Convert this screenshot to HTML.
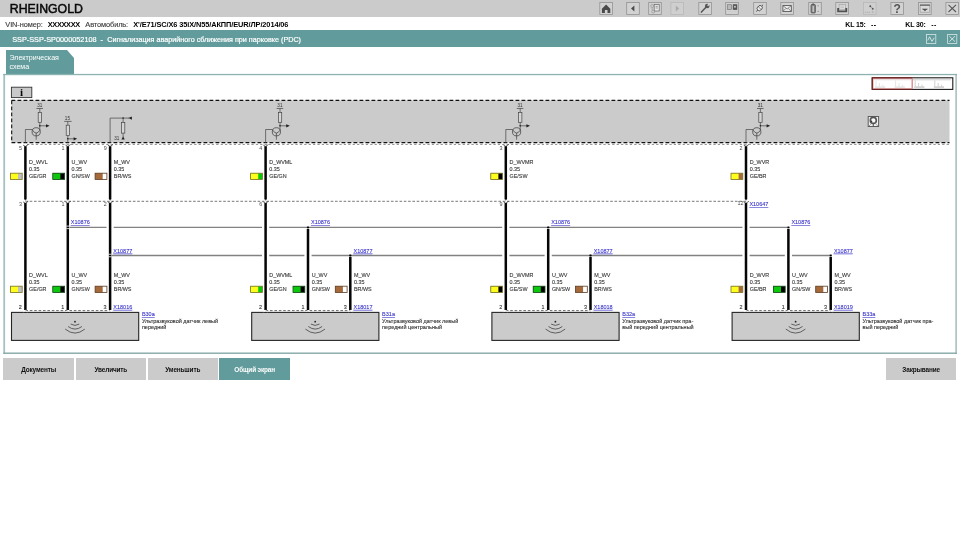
<!DOCTYPE html>
<html lang="ru"><head><meta charset="utf-8"><title>RHEINGOLD</title>
<style>
html,body{margin:0;padding:0;}
body{width:960px;height:540px;overflow:hidden;background:#fff;position:relative;font-family:"Liberation Sans",sans-serif;color:#000;}
#wrap{position:absolute;left:0;top:0;width:960px;height:540px;will-change:transform;}
.abs{position:absolute;}
#top{left:0;top:0;width:960px;height:17px;background:#cbcbcb;}
#logo{left:9.8px;top:3.3px;font-size:12.3px;line-height:13px;color:#0a0a0a;white-space:nowrap;-webkit-text-stroke:0.5px #0a0a0a;}
.row2{top:19.6px;font-size:7px;line-height:9px;white-space:nowrap;letter-spacing:-0.1px;}
.row2 b{font-weight:bold;color:#000;}
.lab{color:#3a3a3a;font-size:7.4px;-webkit-text-stroke:0.12px #3a3a3a;}
#bar{left:0;top:30.3px;width:960px;height:16.9px;background:#629b9b;}
#bartxt{left:12.2px;top:34.6px;font-size:7.3px;line-height:9px;color:#fff;white-space:nowrap;-webkit-text-stroke:0.2px #fff;}
#bartxt2{left:107.2px;top:34.6px;font-size:7.2px;line-height:9px;color:#fff;white-space:nowrap;-webkit-text-stroke:0.2px #fff;}
#tab{left:6px;top:50px;width:68px;height:24.4px;background:#629b9b;clip-path:polygon(0 0,61px 0,68px 8px,68px 100%,0 100%);}
#tabtxt{left:9.4px;top:53.7px;font-size:7.1px;line-height:9.3px;color:#fff;white-space:nowrap;}
#panel{left:3.3px;top:73.9px;width:950px;height:277.4px;border:1.6px solid #a8c1c1;border-top:1.3px solid #8cb2b2;border-bottom:1.4px solid #86a8a8;border-left:2px solid #a6c1c4;background:#fff;}
.btn{top:357.9px;height:22.1px;background:#cbcbcb;font-size:6.45px;font-weight:bold;color:#111;text-align:center;line-height:24.4px;white-space:nowrap;letter-spacing:-0.15px;}
svg text{font-family:"Liberation Sans",sans-serif;}
.t5{font-size:5.4px;fill:#3a3a3a;stroke:#3a3a3a;stroke-width:0.12px;}
.t4{font-size:4.6px;fill:#333;}
.pn{fill:#4a4a4a;stroke:none;}
.pn2{fill:#333;}
.ds{fill:#2e2e2e;font-size:5.5px;}
.lk{font-size:5.5px;fill:#3a34c8;text-decoration:underline;stroke:#3a34c8;stroke-width:0.1px;}
</style></head>
<body>
<div id="wrap">
<div id="top" class="abs"></div>
<div id="logo" class="abs">RHEINGOLD</div>
<div class="abs row2 lab" style="left:5.3px">VIN-номер:</div>
<div class="abs row2" style="left:47.8px;font-size:7.4px;letter-spacing:-0.36px"><b>XXXXXXX</b></div>
<div class="abs row2 lab" style="left:85.3px">Автомобиль:</div>
<div class="abs row2" style="left:133.2px;font-size:7.4px"><b>X'/E71/SC/X6 35iX/N55/АКПП/EUR/ЛР/2014/06</b></div>
<div class="abs row2" style="left:845.2px"><b>KL 15:</b></div><div class="abs row2" style="left:871px;letter-spacing:0.4px"><b>--</b></div>
<div class="abs row2" style="left:905.2px"><b>KL 30:</b></div><div class="abs row2" style="left:931.3px;letter-spacing:0.4px"><b>--</b></div>
<div id="bar" class="abs"></div>
<div id="bartxt" class="abs">SSP-SSP-SP0000052108&nbsp; -</div>
<div id="bartxt2" class="abs">Сигнализация аварийного сближения при парковке (PDC)</div>
<div id="tab" class="abs"></div>
<div id="tabtxt" class="abs">Электрическая<br>схема</div>
<div class="abs btn" style="left:3.4px;width:70.5px">Документы</div>
<div class="abs btn" style="left:75.7px;width:70.3px">Увеличить</div>
<div class="abs btn" style="left:147.7px;width:70.1px">Уменьшить</div>
<div class="abs btn" style="left:219.4px;width:70.6px;background:#629b9b;color:#fff">Общий экран</div>
<div class="abs btn" style="left:886.2px;width:70px">Закрывание</div>
<svg class="abs" style="left:0;top:0" width="960" height="540" viewBox="0 0 960 540">
<g transform="translate(599.3,2)"><rect x="0.5" y="0.5" width="12.6" height="12" fill="#d2d2d2" stroke="#939393" stroke-width="0.8"/><path d="M2.6 6.8L6.8 2.6L11 6.8V11H8.2V8H5.6v3H2.6Z" fill="#4a4a4a"/></g>
<g transform="translate(626.2,2)"><rect x="0.5" y="0.5" width="12.6" height="12" fill="#d2d2d2" stroke="#939393" stroke-width="0.8"/><path d="M8.2 3.6L4.8 6.5L8.2 9.4Z" fill="#4a4a4a"/></g>
<g transform="translate(648.2,2)"><rect x="0.5" y="0.5" width="12.6" height="12" fill="#d2d2d2" stroke="#939393" stroke-width="0.8"/><rect x="6" y="2.6" width="5" height="6.4" fill="#e8e8e8" stroke="#666" stroke-width="0.7"/><path d="M7.4 4.4h2.2M7.4 6h2.2" stroke="#666" stroke-width="0.6"/><circle cx="4" cy="4" r="1.5" fill="none" stroke="#888" stroke-width="0.6"/><circle cx="5" cy="9.6" r="1.5" fill="none" stroke="#888" stroke-width="0.6"/><path d="M4 5.5V8" stroke="#888" stroke-width="0.6"/></g>
<g transform="translate(670.4,2)"><rect x="0.5" y="0.5" width="12.6" height="12" fill="#cfcfcf" stroke="#b8b8b8" stroke-width="0.8"/><path d="M5.4 3.6L8.8 6.5L5.4 9.4Z" fill="#aaa"/></g>
<g transform="translate(698.3,2)"><rect x="0.5" y="0.5" width="12.6" height="12" fill="#d2d2d2" stroke="#939393" stroke-width="0.8"/><path d="M3.1 10.1L7.9 5.1" stroke="#555" stroke-width="1.5" stroke-linecap="round"/><circle cx="8.9" cy="4" r="2.3" fill="#555"/><path d="M9.3 3.7L11.6 1.4" stroke="#d2d2d2" stroke-width="1.5"/></g>
<g transform="translate(725.2,2)"><rect x="0.5" y="0.5" width="12.6" height="12" fill="#d2d2d2" stroke="#939393" stroke-width="0.8"/><rect x="2.4" y="2.7" width="4" height="4.9" fill="#b9b9b9" stroke="#7a7a7a" stroke-width="0.7"/><rect x="7.9" y="2.7" width="3.8" height="4.9" fill="#555" stroke="#4a4a4a" stroke-width="0.6"/><rect x="9" y="3.9" width="1.5" height="1.7" fill="#ddd"/><path d="M2.6 9.7h8.8" stroke="#c4c4c4" stroke-width="0.6"/></g>
<g transform="translate(753.2,2)"><rect x="0.5" y="0.5" width="12.6" height="12" fill="#d2d2d2" stroke="#939393" stroke-width="0.8"/><g transform="rotate(45 6.5 6.1)"><path d="M6.5 1.3V10.9" stroke="#4a4a4a" stroke-width="0.9"/><rect x="4.4" y="3.5" width="4.2" height="5.2" rx="1.7" fill="#efefef" stroke="#4a4a4a" stroke-width="0.9"/><path d="M4.4 6.1H8.6" stroke="#4a4a4a" stroke-width="0.6"/></g></g>
<g transform="translate(780.3,2)"><rect x="0.5" y="0.5" width="12.6" height="12" fill="#d2d2d2" stroke="#939393" stroke-width="0.8"/><rect x="2.6" y="3.6" width="8.4" height="5.8" fill="#e9e9e9" stroke="#4a4a4a" stroke-width="0.8"/><path d="M2.8 3.8L6.8 7L10.8 3.8M2.8 9.2L5.6 6.4M10.8 9.2L8 6.4" stroke="#4a4a4a" stroke-width="0.6" fill="none"/></g>
<g transform="translate(808.2,2)"><rect x="0.5" y="0.5" width="12.6" height="12" fill="#d2d2d2" stroke="#939393" stroke-width="0.8"/><rect x="2.9" y="2.6" width="4.2" height="8.3" rx="0.6" fill="#8a8a8a" stroke="#505050" stroke-width="0.9"/><rect x="4.1" y="1.5" width="1.8" height="1.1" fill="#505050"/><path d="M5 4V10" stroke="#d8d8d8" stroke-width="1"/><path d="M9.2 3.8h1.6M9.2 9.4h1.6" stroke="#8a8a8a" stroke-width="0.8"/></g>
<g transform="translate(835.3,2)"><rect x="0.5" y="0.5" width="12.6" height="12" fill="#d2d2d2" stroke="#939393" stroke-width="0.8"/><rect x="3.8" y="2.6" width="6.2" height="4.6" fill="#e0e0e0" stroke="#9a9a9a" stroke-width="0.6"/><path d="M5 4h3.8M5 5.4h3.8" stroke="#b0b0b0" stroke-width="0.6"/><path d="M1.9 6.1h1.9v2.3h6.2V6.1h1.9V10.3H1.9Z" fill="#515151"/></g>
<g transform="translate(863,2)"><rect x="0.5" y="0.5" width="12.6" height="12" fill="#cfcfcf" stroke="#b8b8b8" stroke-width="0.8"/><circle cx="7.3" cy="4.3" r="0.95" fill="#4c4c4c"/><circle cx="9.7" cy="6.8" r="0.95" fill="#555"/><circle cx="8.6" cy="5.6" r="0.5" fill="#9a9a9a"/><path d="M1.8 10.4h1.4M3.8 10.4h1.4M5.8 10.4h1.4M9 9.4l1.6 1.4" stroke="#b4b4b4" stroke-width="1.4"/></g>
<g transform="translate(890.4,2)"><rect x="0.5" y="0.5" width="12.6" height="12" fill="#d2d2d2" stroke="#939393" stroke-width="0.8"/><text x="6.7" y="10.9" text-anchor="middle" style="font-family:'Liberation Sans',sans-serif;font-size:12px;font-weight:bold;fill:#555">?</text></g>
<g transform="translate(918.1,2)"><rect x="0.5" y="0.5" width="12.6" height="12" fill="#d2d2d2" stroke="#939393" stroke-width="0.8"/><path d="M2.1 3.2V10.3H11.6V3.2" fill="#dadada" stroke="#9a9a9a" stroke-width="0.7"/><path d="M1.9 3.1h9.9" stroke="#505050" stroke-width="1.2"/><path d="M4.3 7.1h5l-2.5 2.2z" fill="#505050"/><path d="M4 7h5.6" stroke="#505050" stroke-width="0.6"/></g>
<g transform="translate(945.4,2)"><rect x="0.5" y="0.5" width="12.6" height="12" fill="#d2d2d2" stroke="#939393" stroke-width="0.8"/><path d="M3.1 2.9L10.6 10M10.6 2.9L3.1 10" stroke="#555" stroke-width="1.05"/></g>
<g transform="translate(926,34)"><rect x="0.4" y="0.4" width="9.4" height="9" fill="none" stroke="#d6e6e6" stroke-width="0.8"/><path d="M1.8 6.4L3.6 2.8L6 7.4L8.2 3.8" stroke="#e8f2f2" stroke-width="0.8" fill="none"/></g>
<g transform="translate(947.2,34)"><rect x="0.4" y="0.4" width="9.2" height="9" fill="none" stroke="#d6e6e6" stroke-width="0.8"/><path d="M2.2 2.2L7.8 7.6M7.8 2.2L2.2 7.6" stroke="#eef6f6" stroke-width="0.8" fill="none"/></g>
<rect x="3.3" y="73.9" width="1.8" height="280" fill="#a6c1c4"/>
<rect x="955.3" y="73.9" width="1.6" height="280" fill="#a8c0c0"/>
<rect x="3.3" y="73.9" width="953.6" height="1.3" fill="#8cb2b2"/>
<rect x="3.3" y="352.5" width="953.6" height="1.4" fill="#86a8a8"/>
<rect x="11.5" y="100.4" width="938" height="42.2" fill="#cbcbcb"/>
<path d="M11.5 100.4H949.5M11.5 142.6H949.5" stroke="#111" stroke-width="1.1" stroke-dasharray="3.8 2.2" fill="none"/>
<path d="M11.7 100.4V142.6" stroke="#111" stroke-width="1.1" stroke-dasharray="3.8 2.2" fill="none"/>
<path d="M27 144.4H949.5" stroke="#8c8c8c" stroke-width="1" stroke-dasharray="2.3 2.1" fill="none"/>
<path d="M25.4 201.3H746" stroke="#555" stroke-width="0.8" stroke-dasharray="2.6 1.7" fill="none"/>
<path d="M69.4 227.4H106.5M113.7 227.4H262M269.2 227.4H502.2M509.4 227.4H742.4M749.6 227.4H787.4" stroke="#828282" stroke-width="1.3" fill="none"/>
<path d="M111.7 255.5H262M269.2 255.5H304.4M311.6 255.5H502.2M509.4 255.5H544.6M551.8 255.5H742.4M749.6 255.5H784.8M792 255.5H829.7" stroke="#828282" stroke-width="1.3" fill="none"/>
<g>
<text x="39.7" y="107" class="t4" text-anchor="middle">31</text><path d="M36.4 108.5H43M39.8 108.5V112.4M39.8 122.3V130" stroke="#444" stroke-width="0.7" fill="none"/><rect x="38.2" y="112.4" width="3.3" height="9.9" fill="#d6d6d6" stroke="#444" stroke-width="0.7"/><path d="M39.8 125.8H46.5" stroke="#444" stroke-width="0.7"/><path d="M46 124.2L49.6 125.8L46 127.4Z" fill="#222"/><circle cx="39.8" cy="125.8" r="0.8" fill="#222"/><circle cx="36.2" cy="131.8" r="4.1" fill="none" stroke="#444" stroke-width="0.8"/><path d="M32.6 130.2 Q36.2 136 39.8 130.2" stroke="#444" stroke-width="0.8" fill="none"/><path d="M36.2 133V139.7" stroke="#444" stroke-width="0.7"/><path d="M32.4 129.5H25.4V143" stroke="#444" stroke-width="0.7" fill="none"/>
<text x="67.4" y="119.6" class="t4" text-anchor="middle">15</text><path d="M64.2 121.4H71.6M67.8 121.4V125.2M67.8 135.5V143" stroke="#444" stroke-width="0.7" fill="none"/><rect x="66.2" y="125.2" width="3.3" height="10.3" fill="#d6d6d6" stroke="#444" stroke-width="0.7"/><path d="M67.8 138.8H74" stroke="#444" stroke-width="0.7"/><path d="M73.6 137.2L77.2 138.8L73.6 140.4Z" fill="#222"/><circle cx="67.8" cy="138.8" r="0.8" fill="#222"/>
<path d="M110.1 143V118.1H129" stroke="#444" stroke-width="0.7" fill="none"/><path d="M128.3 118.1L131.9 116.5V119.7Z" fill="#222"/><circle cx="123.1" cy="118.1" r="0.8" fill="#222"/><path d="M123.1 118.1V122.4M123.1 133.1V137.5" stroke="#444" stroke-width="0.7" fill="none"/><rect x="121.5" y="122.4" width="3.3" height="10.7" fill="#d6d6d6" stroke="#444" stroke-width="0.7"/><path d="M123.1 136.6L124.8 139.6H121.4Z" fill="#222"/><text x="116.7" y="139.7" class="t4" text-anchor="middle">31</text>
<rect x="24.15" y="146.2" width="2.5" height="53" fill="#050505"/>
<path d="M23.1 145.1L25.4 146.4L28.3 144.5" stroke="#222" stroke-width="0.7" fill="none"/>
<rect x="24.15" y="203" width="2.5" height="107" fill="#050505"/>
<path d="M23.1 201.9L25.4 203.2L28.3 201.3" stroke="#222" stroke-width="0.7" fill="none"/>
<path d="M24.15 199.2h2.5l-1.25 1.2z" fill="#050505"/>
<text x="22" y="149.6" class="t5 pn" text-anchor="end">5</text>
<text x="22" y="206" class="t5 pn" text-anchor="end">3</text>
<rect x="66.55" y="146.2" width="2.5" height="53" fill="#050505"/>
<path d="M65.5 145.1L67.8 146.4L70.7 144.5" stroke="#222" stroke-width="0.7" fill="none"/>
<rect x="66.55" y="203" width="2.5" height="107" fill="#050505"/>
<path d="M65.5 201.9L67.8 203.2L70.7 201.3" stroke="#222" stroke-width="0.7" fill="none"/>
<path d="M66.55 199.2h2.5l-1.25 1.2z" fill="#050505"/>
<text x="64.4" y="149.6" class="t5 pn" text-anchor="end">1</text>
<text x="64.4" y="206" class="t5 pn" text-anchor="end">1</text>
<rect x="108.85" y="146.2" width="2.5" height="53" fill="#050505"/>
<path d="M107.8 145.1L110.1 146.4L113 144.5" stroke="#222" stroke-width="0.7" fill="none"/>
<rect x="108.85" y="203" width="2.5" height="107" fill="#050505"/>
<path d="M107.8 201.9L110.1 203.2L113 201.3" stroke="#222" stroke-width="0.7" fill="none"/>
<path d="M108.85 199.2h2.5l-1.25 1.2z" fill="#050505"/>
<text x="106.7" y="149.6" class="t5 pn" text-anchor="end">9</text>
<text x="106.7" y="206" class="t5 pn" text-anchor="end">2</text>
<rect x="66.4" y="225.7" width="2.8" height="0.8" fill="#fff"/>
<rect x="66.4" y="228.3" width="2.8" height="0.8" fill="#fff"/>
<rect x="108.7" y="253.8" width="2.8" height="0.8" fill="#fff"/>
<rect x="108.7" y="256.4" width="2.8" height="0.8" fill="#fff"/>
<text x="29.1" y="163.6" class="t5">D_WVL</text><text x="29.1" y="170.9" class="t5">0.35</text><text x="29.1" y="178.2" class="t5">GE/GR</text><rect x="10.4" y="173.2" width="11.8" height="6.2" fill="#c0c0c0"/><rect x="10.4" y="173.2" width="7.6" height="6.2" fill="#ffff1e"/><rect x="10.4" y="173.2" width="11.8" height="6.2" fill="none" stroke="#7d7420" stroke-width="0.8"/>
<text x="71.5" y="163.6" class="t5">U_WV</text><text x="71.5" y="170.9" class="t5">0.35</text><text x="71.5" y="178.2" class="t5">GN/SW</text><rect x="52.8" y="173.2" width="11.8" height="6.2" fill="#000000"/><rect x="52.8" y="173.2" width="7.6" height="6.2" fill="#0cc80c"/><rect x="52.8" y="173.2" width="11.8" height="6.2" fill="none" stroke="#14501a" stroke-width="0.8"/>
<text x="113.8" y="163.6" class="t5">M_WV</text><text x="113.8" y="170.9" class="t5">0.35</text><text x="113.8" y="178.2" class="t5">BR/WS</text><rect x="95.1" y="173.2" width="11.8" height="6.2" fill="#ffffff"/><rect x="95.1" y="173.2" width="7.6" height="6.2" fill="#a5693a"/><rect x="95.1" y="173.2" width="11.8" height="6.2" fill="none" stroke="#5a3a22" stroke-width="0.8"/>
<text x="29.1" y="276.6" class="t5">D_WVL</text><text x="29.1" y="283.9" class="t5">0.35</text><text x="29.1" y="291.2" class="t5">GE/GR</text><rect x="10.4" y="286.2" width="11.8" height="6.2" fill="#c0c0c0"/><rect x="10.4" y="286.2" width="7.6" height="6.2" fill="#ffff1e"/><rect x="10.4" y="286.2" width="11.8" height="6.2" fill="none" stroke="#7d7420" stroke-width="0.8"/>
<text x="71.5" y="276.6" class="t5">U_WV</text><text x="71.5" y="283.9" class="t5">0.35</text><text x="71.5" y="291.2" class="t5">GN/SW</text><rect x="52.8" y="286.2" width="11.8" height="6.2" fill="#000000"/><rect x="52.8" y="286.2" width="7.6" height="6.2" fill="#0cc80c"/><rect x="52.8" y="286.2" width="11.8" height="6.2" fill="none" stroke="#14501a" stroke-width="0.8"/>
<text x="113.8" y="276.6" class="t5">M_WV</text><text x="113.8" y="283.9" class="t5">0.35</text><text x="113.8" y="291.2" class="t5">BR/WS</text><rect x="95.1" y="286.2" width="11.8" height="6.2" fill="#ffffff"/><rect x="95.1" y="286.2" width="7.6" height="6.2" fill="#a5693a"/><rect x="95.1" y="286.2" width="11.8" height="6.2" fill="none" stroke="#5a3a22" stroke-width="0.8"/>
<text x="70.8" y="224.3" class="lk">X10876</text>
<text x="113.3" y="252.6" class="lk">X10877</text>
<text x="21.8" y="308.8" class="t5 pn2" text-anchor="end">2</text>
<text x="64.2" y="308.8" class="t5 pn2" text-anchor="end">1</text>
<text x="106.5" y="308.8" class="t5 pn2" text-anchor="end">3</text>
<text x="113.3" y="308.9" class="lk">X18016</text>
<path d="M25.4 310.6H110.1" stroke="#444" stroke-width="0.8" stroke-dasharray="2.6 1.8" fill="none"/>
<rect x="11.5" y="312.4" width="127.2" height="28" fill="#cbcbcb" stroke="#262626" stroke-width="1.1"/>
<circle cx="75" cy="321.7" r="0.9" fill="#222"/>
<path d="M70.7 324.1Q75 326.7 79.3 324.1M68.1 326.5Q75 331.7 81.9 326.5M65.2 329.1Q75 337.1 84.8 329.1" stroke="#4a4a4a" stroke-width="0.85" fill="none"/>
<path d="M23.5 311.9L25.4 310.3L27.3 311.9" stroke="#fff" stroke-width="0.7" fill="none"/>
<path d="M65.9 311.9L67.8 310.3L69.7 311.9" stroke="#fff" stroke-width="0.7" fill="none"/>
<path d="M108.2 311.9L110.1 310.3L112 311.9" stroke="#fff" stroke-width="0.7" fill="none"/>
<text x="141.9" y="316.2" class="lk">B30a</text>
<text x="141.9" y="322.9" class="t5 ds">Ультразвуковой датчик левый</text>
<text x="141.9" y="328.9" class="t5 ds">передний</text>
</g>
<g>
<text x="279.9" y="107" class="t4" text-anchor="middle">31</text><path d="M276.6 108.5H283.2M280 108.5V112.4M280 122.3V130" stroke="#444" stroke-width="0.7" fill="none"/><rect x="278.4" y="112.4" width="3.3" height="9.9" fill="#d6d6d6" stroke="#444" stroke-width="0.7"/><path d="M280 125.8H286.7" stroke="#444" stroke-width="0.7"/><path d="M286.2 124.2L289.8 125.8L286.2 127.4Z" fill="#222"/><circle cx="280" cy="125.8" r="0.8" fill="#222"/><circle cx="276.4" cy="131.8" r="4.1" fill="none" stroke="#444" stroke-width="0.8"/><path d="M272.8 130.2 Q276.4 136 280 130.2" stroke="#444" stroke-width="0.8" fill="none"/><path d="M276.4 133V139.7" stroke="#444" stroke-width="0.7"/><path d="M272.6 129.5H265.6V143" stroke="#444" stroke-width="0.7" fill="none"/>
<rect x="264.35" y="146.2" width="2.5" height="53" fill="#050505"/>
<path d="M263.3 145.1L265.6 146.4L268.5 144.5" stroke="#222" stroke-width="0.7" fill="none"/>
<rect x="264.35" y="203" width="2.5" height="107" fill="#050505"/>
<path d="M263.3 201.9L265.6 203.2L268.5 201.3" stroke="#222" stroke-width="0.7" fill="none"/>
<path d="M264.35 199.2h2.5l-1.25 1.2z" fill="#050505"/>
<text x="262.2" y="149.6" class="t5 pn" text-anchor="end">4</text>
<text x="262.2" y="206" class="t5 pn" text-anchor="end">6</text>
<rect x="306.75" y="228.9" width="2.5" height="81.1" fill="#050505"/>
<rect x="306.85" y="226.5" width="2.3" height="1.8" rx="0.6" fill="#050505"/>
<rect x="349.05" y="257" width="2.5" height="53" fill="#050505"/>
<rect x="349.15" y="254.6" width="2.3" height="1.8" rx="0.6" fill="#050505"/>
<text x="269.3" y="163.6" class="t5">D_WVML</text><text x="269.3" y="170.9" class="t5">0.35</text><text x="269.3" y="178.2" class="t5">GE/GN</text><rect x="250.6" y="173.2" width="11.8" height="6.2" fill="#0cc80c"/><rect x="250.6" y="173.2" width="7.6" height="6.2" fill="#ffff1e"/><rect x="250.6" y="173.2" width="11.8" height="6.2" fill="none" stroke="#7d7420" stroke-width="0.8"/>
<text x="269.3" y="276.6" class="t5">D_WVML</text><text x="269.3" y="283.9" class="t5">0.35</text><text x="269.3" y="291.2" class="t5">GE/GN</text><rect x="250.6" y="286.2" width="11.8" height="6.2" fill="#0cc80c"/><rect x="250.6" y="286.2" width="7.6" height="6.2" fill="#ffff1e"/><rect x="250.6" y="286.2" width="11.8" height="6.2" fill="none" stroke="#7d7420" stroke-width="0.8"/>
<text x="311.7" y="276.6" class="t5">U_WV</text><text x="311.7" y="283.9" class="t5">0.35</text><text x="311.7" y="291.2" class="t5">GN/SW</text><rect x="293" y="286.2" width="11.8" height="6.2" fill="#000000"/><rect x="293" y="286.2" width="7.6" height="6.2" fill="#0cc80c"/><rect x="293" y="286.2" width="11.8" height="6.2" fill="none" stroke="#14501a" stroke-width="0.8"/>
<text x="354" y="276.6" class="t5">M_WV</text><text x="354" y="283.9" class="t5">0.35</text><text x="354" y="291.2" class="t5">BR/WS</text><rect x="335.3" y="286.2" width="11.8" height="6.2" fill="#ffffff"/><rect x="335.3" y="286.2" width="7.6" height="6.2" fill="#a5693a"/><rect x="335.3" y="286.2" width="11.8" height="6.2" fill="none" stroke="#5a3a22" stroke-width="0.8"/>
<text x="311" y="224.3" class="lk">X10876</text>
<text x="353.5" y="252.6" class="lk">X10877</text>
<text x="262" y="308.8" class="t5 pn2" text-anchor="end">2</text>
<text x="304.4" y="308.8" class="t5 pn2" text-anchor="end">1</text>
<text x="346.7" y="308.8" class="t5 pn2" text-anchor="end">3</text>
<text x="353.5" y="308.9" class="lk">X18017</text>
<path d="M265.6 310.6H350.3" stroke="#444" stroke-width="0.8" stroke-dasharray="2.6 1.8" fill="none"/>
<rect x="251.7" y="312.4" width="127.2" height="28" fill="#cbcbcb" stroke="#262626" stroke-width="1.1"/>
<circle cx="315.2" cy="321.7" r="0.9" fill="#222"/>
<path d="M310.9 324.1Q315.2 326.7 319.5 324.1M308.3 326.5Q315.2 331.7 322.1 326.5M305.4 329.1Q315.2 337.1 325 329.1" stroke="#4a4a4a" stroke-width="0.85" fill="none"/>
<path d="M263.7 311.9L265.6 310.3L267.5 311.9" stroke="#fff" stroke-width="0.7" fill="none"/>
<path d="M306.1 311.9L308 310.3L309.9 311.9" stroke="#fff" stroke-width="0.7" fill="none"/>
<path d="M348.4 311.9L350.3 310.3L352.2 311.9" stroke="#fff" stroke-width="0.7" fill="none"/>
<text x="382.1" y="316.2" class="lk">B31a</text>
<text x="382.1" y="322.9" class="t5 ds">Ультразвуковой датчик левый</text>
<text x="382.1" y="328.9" class="t5 ds">передний центральный</text>
</g>
<g>
<text x="520.1" y="107" class="t4" text-anchor="middle">31</text><path d="M516.8 108.5H523.4M520.2 108.5V112.4M520.2 122.3V130" stroke="#444" stroke-width="0.7" fill="none"/><rect x="518.6" y="112.4" width="3.3" height="9.9" fill="#d6d6d6" stroke="#444" stroke-width="0.7"/><path d="M520.2 125.8H526.9" stroke="#444" stroke-width="0.7"/><path d="M526.4 124.2L530 125.8L526.4 127.4Z" fill="#222"/><circle cx="520.2" cy="125.8" r="0.8" fill="#222"/><circle cx="516.6" cy="131.8" r="4.1" fill="none" stroke="#444" stroke-width="0.8"/><path d="M513 130.2 Q516.6 136 520.2 130.2" stroke="#444" stroke-width="0.8" fill="none"/><path d="M516.6 133V139.7" stroke="#444" stroke-width="0.7"/><path d="M512.8 129.5H505.8V143" stroke="#444" stroke-width="0.7" fill="none"/>
<rect x="504.55" y="146.2" width="2.5" height="53" fill="#050505"/>
<path d="M503.5 145.1L505.8 146.4L508.7 144.5" stroke="#222" stroke-width="0.7" fill="none"/>
<rect x="504.55" y="203" width="2.5" height="107" fill="#050505"/>
<path d="M503.5 201.9L505.8 203.2L508.7 201.3" stroke="#222" stroke-width="0.7" fill="none"/>
<path d="M504.55 199.2h2.5l-1.25 1.2z" fill="#050505"/>
<text x="502.4" y="149.6" class="t5 pn" text-anchor="end">3</text>
<text x="502.4" y="206" class="t5 pn" text-anchor="end">9</text>
<rect x="546.95" y="228.9" width="2.5" height="81.1" fill="#050505"/>
<rect x="547.05" y="226.5" width="2.3" height="1.8" rx="0.6" fill="#050505"/>
<rect x="589.25" y="257" width="2.5" height="53" fill="#050505"/>
<rect x="589.35" y="254.6" width="2.3" height="1.8" rx="0.6" fill="#050505"/>
<text x="509.5" y="163.6" class="t5">D_WVMR</text><text x="509.5" y="170.9" class="t5">0.35</text><text x="509.5" y="178.2" class="t5">GE/SW</text><rect x="490.8" y="173.2" width="11.8" height="6.2" fill="#000000"/><rect x="490.8" y="173.2" width="7.6" height="6.2" fill="#ffff1e"/><rect x="490.8" y="173.2" width="11.8" height="6.2" fill="none" stroke="#7d7420" stroke-width="0.8"/>
<text x="509.5" y="276.6" class="t5">D_WVMR</text><text x="509.5" y="283.9" class="t5">0.35</text><text x="509.5" y="291.2" class="t5">GE/SW</text><rect x="490.8" y="286.2" width="11.8" height="6.2" fill="#000000"/><rect x="490.8" y="286.2" width="7.6" height="6.2" fill="#ffff1e"/><rect x="490.8" y="286.2" width="11.8" height="6.2" fill="none" stroke="#7d7420" stroke-width="0.8"/>
<text x="551.9" y="276.6" class="t5">U_WV</text><text x="551.9" y="283.9" class="t5">0.35</text><text x="551.9" y="291.2" class="t5">GN/SW</text><rect x="533.2" y="286.2" width="11.8" height="6.2" fill="#000000"/><rect x="533.2" y="286.2" width="7.6" height="6.2" fill="#0cc80c"/><rect x="533.2" y="286.2" width="11.8" height="6.2" fill="none" stroke="#14501a" stroke-width="0.8"/>
<text x="594.2" y="276.6" class="t5">M_WV</text><text x="594.2" y="283.9" class="t5">0.35</text><text x="594.2" y="291.2" class="t5">BR/WS</text><rect x="575.5" y="286.2" width="11.8" height="6.2" fill="#ffffff"/><rect x="575.5" y="286.2" width="7.6" height="6.2" fill="#a5693a"/><rect x="575.5" y="286.2" width="11.8" height="6.2" fill="none" stroke="#5a3a22" stroke-width="0.8"/>
<text x="551.2" y="224.3" class="lk">X10876</text>
<text x="593.7" y="252.6" class="lk">X10877</text>
<text x="502.2" y="308.8" class="t5 pn2" text-anchor="end">2</text>
<text x="544.6" y="308.8" class="t5 pn2" text-anchor="end">1</text>
<text x="586.9" y="308.8" class="t5 pn2" text-anchor="end">3</text>
<text x="593.7" y="308.9" class="lk">X18018</text>
<path d="M505.8 310.6H590.5" stroke="#444" stroke-width="0.8" stroke-dasharray="2.6 1.8" fill="none"/>
<rect x="491.9" y="312.4" width="127.2" height="28" fill="#cbcbcb" stroke="#262626" stroke-width="1.1"/>
<circle cx="555.4" cy="321.7" r="0.9" fill="#222"/>
<path d="M551.1 324.1Q555.4 326.7 559.7 324.1M548.5 326.5Q555.4 331.7 562.3 326.5M545.6 329.1Q555.4 337.1 565.2 329.1" stroke="#4a4a4a" stroke-width="0.85" fill="none"/>
<path d="M503.9 311.9L505.8 310.3L507.7 311.9" stroke="#fff" stroke-width="0.7" fill="none"/>
<path d="M546.3 311.9L548.2 310.3L550.1 311.9" stroke="#fff" stroke-width="0.7" fill="none"/>
<path d="M588.6 311.9L590.5 310.3L592.4 311.9" stroke="#fff" stroke-width="0.7" fill="none"/>
<text x="622.3" y="316.2" class="lk">B32a</text>
<text x="622.3" y="322.9" class="t5 ds">Ультразвуковой датчик пра-</text>
<text x="622.3" y="328.9" class="t5 ds">вый передний центральный</text>
</g>
<g>
<text x="760.3" y="107" class="t4" text-anchor="middle">31</text><path d="M757 108.5H763.6M760.4 108.5V112.4M760.4 122.3V130" stroke="#444" stroke-width="0.7" fill="none"/><rect x="758.8" y="112.4" width="3.3" height="9.9" fill="#d6d6d6" stroke="#444" stroke-width="0.7"/><path d="M760.4 125.8H767.1" stroke="#444" stroke-width="0.7"/><path d="M766.6 124.2L770.2 125.8L766.6 127.4Z" fill="#222"/><circle cx="760.4" cy="125.8" r="0.8" fill="#222"/><circle cx="756.8" cy="131.8" r="4.1" fill="none" stroke="#444" stroke-width="0.8"/><path d="M753.2 130.2 Q756.8 136 760.4 130.2" stroke="#444" stroke-width="0.8" fill="none"/><path d="M756.8 133V139.7" stroke="#444" stroke-width="0.7"/><path d="M753 129.5H746V143" stroke="#444" stroke-width="0.7" fill="none"/>
<rect x="744.75" y="146.2" width="2.5" height="53" fill="#050505"/>
<path d="M743.7 145.1L746 146.4L748.9 144.5" stroke="#222" stroke-width="0.7" fill="none"/>
<rect x="744.75" y="203" width="2.5" height="107" fill="#050505"/>
<path d="M743.7 201.9L746 203.2L748.9 201.3" stroke="#222" stroke-width="0.7" fill="none"/>
<path d="M744.75 199.2h2.5l-1.25 1.2z" fill="#050505"/>
<text x="742.6" y="149.6" class="t5 pn" text-anchor="end">2</text>
<text x="743.4" y="205.4" class="t5 pn" text-anchor="end">12</text>
<rect x="787.15" y="228.9" width="2.5" height="81.1" fill="#050505"/>
<rect x="787.25" y="226.5" width="2.3" height="1.8" rx="0.6" fill="#050505"/>
<rect x="829.45" y="257" width="2.5" height="53" fill="#050505"/>
<rect x="829.55" y="254.6" width="2.3" height="1.8" rx="0.6" fill="#050505"/>
<text x="749.7" y="163.6" class="t5">D_WVR</text><text x="749.7" y="170.9" class="t5">0.35</text><text x="749.7" y="178.2" class="t5">GE/BR</text><rect x="731" y="173.2" width="11.8" height="6.2" fill="#a5693a"/><rect x="731" y="173.2" width="7.6" height="6.2" fill="#ffff1e"/><rect x="731" y="173.2" width="11.8" height="6.2" fill="none" stroke="#7d7420" stroke-width="0.8"/>
<text x="749.7" y="276.6" class="t5">D_WVR</text><text x="749.7" y="283.9" class="t5">0.35</text><text x="749.7" y="291.2" class="t5">GE/BR</text><rect x="731" y="286.2" width="11.8" height="6.2" fill="#a5693a"/><rect x="731" y="286.2" width="7.6" height="6.2" fill="#ffff1e"/><rect x="731" y="286.2" width="11.8" height="6.2" fill="none" stroke="#7d7420" stroke-width="0.8"/>
<text x="792.1" y="276.6" class="t5">U_WV</text><text x="792.1" y="283.9" class="t5">0.35</text><text x="792.1" y="291.2" class="t5">GN/SW</text><rect x="773.4" y="286.2" width="11.8" height="6.2" fill="#000000"/><rect x="773.4" y="286.2" width="7.6" height="6.2" fill="#0cc80c"/><rect x="773.4" y="286.2" width="11.8" height="6.2" fill="none" stroke="#14501a" stroke-width="0.8"/>
<text x="834.4" y="276.6" class="t5">M_WV</text><text x="834.4" y="283.9" class="t5">0.35</text><text x="834.4" y="291.2" class="t5">BR/WS</text><rect x="815.7" y="286.2" width="11.8" height="6.2" fill="#ffffff"/><rect x="815.7" y="286.2" width="7.6" height="6.2" fill="#a5693a"/><rect x="815.7" y="286.2" width="11.8" height="6.2" fill="none" stroke="#5a3a22" stroke-width="0.8"/>
<text x="791.4" y="224.3" class="lk">X10876</text>
<text x="833.9" y="252.6" class="lk">X10877</text>
<text x="742.4" y="308.8" class="t5 pn2" text-anchor="end">2</text>
<text x="784.8" y="308.8" class="t5 pn2" text-anchor="end">1</text>
<text x="827.1" y="308.8" class="t5 pn2" text-anchor="end">3</text>
<text x="833.9" y="308.9" class="lk">X18019</text>
<path d="M746 310.6H830.7" stroke="#444" stroke-width="0.8" stroke-dasharray="2.6 1.8" fill="none"/>
<rect x="732.1" y="312.4" width="127.2" height="28" fill="#cbcbcb" stroke="#262626" stroke-width="1.1"/>
<circle cx="795.6" cy="321.7" r="0.9" fill="#222"/>
<path d="M791.3 324.1Q795.6 326.7 799.9 324.1M788.7 326.5Q795.6 331.7 802.5 326.5M785.8 329.1Q795.6 337.1 805.4 329.1" stroke="#4a4a4a" stroke-width="0.85" fill="none"/>
<path d="M744.1 311.9L746 310.3L747.9 311.9" stroke="#fff" stroke-width="0.7" fill="none"/>
<path d="M786.5 311.9L788.4 310.3L790.3 311.9" stroke="#fff" stroke-width="0.7" fill="none"/>
<path d="M828.8 311.9L830.7 310.3L832.6 311.9" stroke="#fff" stroke-width="0.7" fill="none"/>
<text x="862.5" y="316.2" class="lk">B33a</text>
<text x="862.5" y="322.9" class="t5 ds">Ультразвуковой датчик пра-</text>
<text x="862.5" y="328.9" class="t5 ds">вый передний</text>
</g>
<text x="749.4" y="206.1" class="lk">X10647</text>
<rect x="868.2" y="116.5" width="10.4" height="10" fill="#efefef" stroke="#5c5c5c" stroke-width="1"/>
<circle cx="873.3" cy="120.4" r="3" fill="#fafafa" stroke="#555" stroke-width="1.6"/>
<path d="M873.3 123.6V126.2" stroke="#555" stroke-width="1.1" fill="none"/>
<path d="M869 126l1.8-1.8M877.8 126l-1.8-1.8" stroke="#888" stroke-width="0.8" fill="none"/>
<circle cx="871.4" cy="121.4" r="0.9" fill="#333"/>
<rect x="872.2" y="77.8" width="80.6" height="11.6" fill="#fff" stroke="#1c1c1c" stroke-width="1.1"/>
<path d="M874 79.8H951" stroke="#cfcfcf" stroke-width="1"/>
<rect x="875" y="86.2" width="10.2" height="2" fill="#d4d4d4"/>
<rect x="894.6" y="86.2" width="10.2" height="2" fill="#d4d4d4"/>
<rect x="914.2" y="86.2" width="10.2" height="2" fill="#d4d4d4"/>
<rect x="933.8" y="86.2" width="10.2" height="2" fill="#d4d4d4"/>
<path d="M876 80.4V86.4M879.4 83V86.4M882.8 84.6V86.4M895.6 80.4V86.4M899 83V86.4M902.4 84.6V86.4M915.2 80.4V86.4M918.6 83V86.4M922 84.6V86.4M934.8 80.4V86.4M938.2 83V86.4M941.6 84.6V86.4" stroke="#d0d0d0" stroke-width="1" fill="none"/>
<rect x="873.2" y="78.8" width="38.6" height="9.6" fill="#fff" fill-opacity="0.45" stroke="#e9b4b4" stroke-width="0.9"/>
<path d="M912.4 77.9H872.3V89.3H912.4" fill="none" stroke="#7c2323" stroke-width="1.1"/>
<path d="M912.4 78.4V88.8" fill="none" stroke="#d98c8c" stroke-width="1"/>
<rect x="11.4" y="87.2" width="20.4" height="10.4" fill="#c9c9c9" stroke="#333" stroke-width="0.9"/>
<text x="21.6" y="96.3" text-anchor="middle" style="font-family:'Liberation Serif',serif;font-weight:bold;font-size:11px;fill:#080808">i</text>
</svg>
</div>
</body></html>
